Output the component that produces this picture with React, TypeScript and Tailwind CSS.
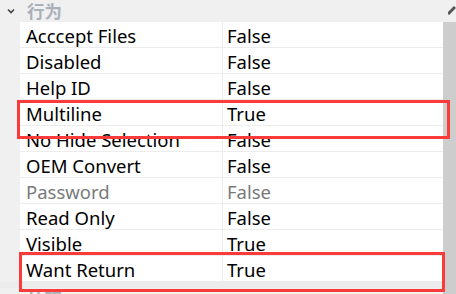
const rows = [
  { name: 'Acccept Files', value: 'False' },
  { name: 'Disabled', value: 'False' },
  { name: 'Help ID', value: 'False' },
  { name: 'Multiline', value: 'True' },
  { name: 'No Hide Selection', value: 'False' },
  { name: 'OEM Convert', value: 'False' },
  { name: 'Password', value: 'False', dim: true },
  { name: 'Read Only', value: 'False' },
  { name: 'Visible', value: 'True' },
  { name: 'Want Return', value: 'True' },
];

function Chevron() {
  return (
    <svg width="8" height="6" viewBox="0 0 8 6" className="shrink-0">
      <path d="M1 1.5 L4 4.5 L7 1.5" fill="none" stroke="#444" strokeWidth="1.6" />
    </svg>
  );
}

function Category({ label }: { label: string }) {
  return (
    <div className="flex h-[22px] shrink-0 items-center bg-[#f0f0f0]">
      <div className="flex w-[20px] justify-center pl-[1px]">
        <Chevron />
      </div>
      <span className="pl-[7px] text-[17.5px] font-bold leading-[22px] text-[#a9b1bb]">{label}</span>
    </div>
  );
}

export default function App() {
  return (
    <div
      className="relative flex h-[294px] w-[456px] overflow-hidden bg-[#f0f0f0] text-black"
      style={{ fontFamily: '"Noto Sans", "Noto Sans CJK SC", sans-serif' }}
    >
      <div className="flex w-[443px] shrink-0 flex-col">
        <Category label="行为" />
        {rows.map((r) => (
          <div key={r.name} className="flex h-[26px] shrink-0">
            <div className="w-[20px] shrink-0 bg-[#f0f0f0]" />
            <div className="flex flex-1 border-b border-[#ececec] bg-white">
              <div className={`w-[203px] shrink-0 border-r border-[#ececec] pl-[6px] pt-[1px] text-[18.5px] leading-[25px] ${r.dim ? 'text-[#7a7a7a]' : ''}`}>
                {r.name}
              </div>
              <div className={`flex-1 pl-[4px] pt-[1px] text-[18.5px] leading-[25px] ${r.dim ? 'text-[#7a7a7a]' : ''}`}>
                {r.value}
              </div>
            </div>
          </div>
        ))}
        <div className="h-[6px] shrink-0 bg-[#ececec]" />
        <Category label="外观" />
      </div>

      {/* scrollbar */}
      <div className="flex w-[13px] shrink-0 flex-col">
        <div className="flex h-[22px] items-start justify-end bg-[#f0f0f0] pt-[5px]">
          <svg width="8" height="10" viewBox="0 0 8 10">
            <path d="M0 9 L7 2" stroke="#555" strokeWidth="3" />
          </svg>
        </div>
        <div className="flex-1 bg-[#cdcdcd]" />
      </div>

      {/* highlight boxes */}
      <div className="absolute left-[17px] top-[100px] h-[39px] w-[433px] border-[3px] border-[#fb3a3a]" />
      <div className="absolute left-[19px] top-[252px] h-[40px] w-[426px] border-[3px] border-[#fb3a3a]" />
    </div>
  );
}
